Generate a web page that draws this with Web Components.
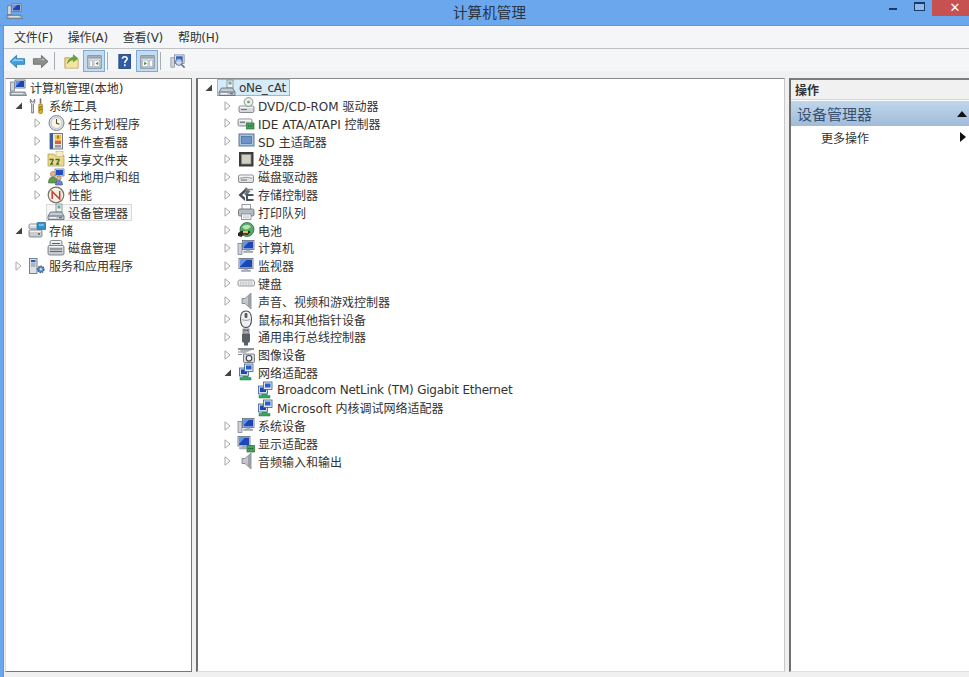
<!DOCTYPE html>
<html lang="zh"><head><meta charset="utf-8"><title>计算机管理</title>
<style>
html,body{margin:0;padding:0;background:#f0f0f0;overflow:hidden}
body{font-family:"DejaVu Sans","Noto Sans CJK SC",sans-serif;font-size:12px;color:#333}
</style></head>
<body>
<mmc-window>
  <mmc-titlebar slot="title">计算机管理</mmc-titlebar>
  <mmc-menubar slot="menu"><span>文件(F)</span><span>操作(A)</span><span>查看(V)</span><span>帮助(H)</span></mmc-menubar>
  <mmc-toolbar slot="tools">
    <tb-btn icon="back" w="19"></tb-btn><tb-btn icon="forward" w="24"></tb-btn><tb-sep></tb-sep>
    <tb-btn icon="folderup" w="22"></tb-btn><tb-btn icon="paneleft" w="22" on></tb-btn><tb-sep></tb-sep>
    <tb-btn icon="help" w="22"></tb-btn><tb-btn icon="paneright" w="22" on></tb-btn><tb-sep></tb-sep>
    <tb-btn icon="scan" w="22"></tb-btn>
  </mmc-toolbar>
  <tree-panel slot="left" style="--base:3px;--bl:1px solid #dcdcdc;--bt:1px solid #8a8a8a;--br:1px solid #777;--bb:1px solid #777">
    <tree-row level="0" arrow="none" icon="mgmt">计算机管理(本地)</tree-row>
    <tree-row level="1" arrow="open" icon="tools">系统工具</tree-row>
    <tree-row level="2" arrow="closed" icon="clock">任务计划程序</tree-row>
    <tree-row level="2" arrow="closed" icon="eventlog">事件查看器</tree-row>
    <tree-row level="2" arrow="closed" icon="share">共享文件夹</tree-row>
    <tree-row level="2" arrow="closed" icon="users">本地用户和组</tree-row>
    <tree-row level="2" arrow="closed" icon="perf">性能</tree-row>
    <tree-row level="2" arrow="blank" icon="devmgr" sel="grey">设备管理器</tree-row>
    <tree-row level="1" arrow="open" icon="storage">存储</tree-row>
    <tree-row level="2" arrow="blank" icon="diskmgmt">磁盘管理</tree-row>
    <tree-row level="1" arrow="closed" icon="services">服务和应用程序</tree-row>
  </tree-panel>
  <tree-panel slot="center" style="--base:20px;--bl:2px solid #6f6f6f;--bt:1px solid #8a8a8a;--br:1px solid #c8c8c8;--bb:1px solid #dcdcdc">
    <tree-row level="0" arrow="open" icon="devmgr" sel="blue"><span style="letter-spacing:-.3px">oNe_cAt</span></tree-row>
    <tree-row level="1" arrow="closed" icon="dvd">DVD/CD-ROM 驱动器</tree-row>
    <tree-row level="1" arrow="closed" icon="ide">IDE ATA/ATAPI 控制器</tree-row>
    <tree-row level="1" arrow="closed" icon="sd">SD 主适配器</tree-row>
    <tree-row level="1" arrow="closed" icon="cpu">处理器</tree-row>
    <tree-row level="1" arrow="closed" icon="disk">磁盘驱动器</tree-row>
    <tree-row level="1" arrow="closed" icon="storctl">存储控制器</tree-row>
    <tree-row level="1" arrow="closed" icon="printer">打印队列</tree-row>
    <tree-row level="1" arrow="closed" icon="battery">电池</tree-row>
    <tree-row level="1" arrow="closed" icon="computer">计算机</tree-row>
    <tree-row level="1" arrow="closed" icon="monitor">监视器</tree-row>
    <tree-row level="1" arrow="closed" icon="keyboard">键盘</tree-row>
    <tree-row level="1" arrow="closed" icon="speaker">声音、视频和游戏控制器</tree-row>
    <tree-row level="1" arrow="closed" icon="mouse">鼠标和其他指针设备</tree-row>
    <tree-row level="1" arrow="closed" icon="usb">通用串行总线控制器</tree-row>
    <tree-row level="1" arrow="closed" icon="camera">图像设备</tree-row>
    <tree-row level="1" arrow="open" icon="net">网络适配器</tree-row>
    <tree-row level="2" arrow="blank" icon="net"><span style="letter-spacing:-.22px">Broadcom NetLink (TM) Gigabit Ethernet</span></tree-row>
    <tree-row level="2" arrow="blank" icon="net">Microsoft 内核调试网络适配器</tree-row>
    <tree-row level="1" arrow="closed" icon="computer">系统设备</tree-row>
    <tree-row level="1" arrow="closed" icon="display">显示适配器</tree-row>
    <tree-row level="1" arrow="closed" icon="speaker">音频输入和输出</tree-row>
  </tree-panel>
  <action-pane slot="right" heading="操作" section="设备管理器" item="更多操作"></action-pane>
</mmc-window>
<script>
const MON=(x,y,w,h)=>`<rect x="${x}" y="${y}" width="${w}" height="${h}" fill="#e4e9f0" stroke="#5b6675" stroke-width=".8"/><rect x="${x+1}" y="${y+1}" width="${w-2}" height="${h-2}" fill="#1c46b8"/><path d="M${x+1} ${y+1}h${(w-2)*.6}L${x+1} ${y+h-2}z" fill="#5f93e6"/>`;
const STAND=(x,y)=>`<path d="M${x-1.5} ${y}h3v1.5h3V${y+3}h-9v-1.5h3z" fill="#a9b3bf" stroke="#79838f" stroke-width=".4"/>`;
const DRIVE=(x,y,w,h,c='#d5d8dc')=>`<rect x="${x}" y="${y}" width="${w}" height="${h}" rx="1.5" fill="${c}" stroke="#6b7076" stroke-width=".8"/><path d="M${x+1} ${y+1.2}h${w-2}" stroke="#fff"/>`;
const NET=`<path d="M6 11h5v3.500h3V17H3v-2.500h3z" fill="#37a85a" stroke="#1f7a3c" stroke-width=".5"/><rect x="2.500" y="5" width="9" height="8" fill="#cfdcec" stroke="#39608f" stroke-width=".8"/><rect x="4" y="6.500" width="6" height="4.500" fill="#1c46b8"/><rect x="7.500" y="1" width="8.500" height="7.500" fill="#dfe8f3" stroke="#39608f" stroke-width=".8"/><rect x="9" y="2.500" width="5.500" height="4" fill="#2a5ccc"/>`;
const ICONS={
back:`<path d="M1 9l7-6.500V6h8.500v6H8v3.500z" fill="#3f9fe0" stroke="#1d6fae" stroke-width=".8"/><path d="M3 9l4-3.400V7h8v1.500H7z" fill="#8fd2f6"/>`,
forward:`<path d="M17 9l-7-6.500V6H1.500v6H10v3.500z" fill="#8d8d8d" stroke="#5f5f5f" stroke-width=".8"/><path d="M3 7h8V5l3 3z" fill="#bdbdbd"/>`,
folderup:`<path d="M2 5h5l1.500 1.500H16V16H2z" fill="#ecd27a" stroke="#b3944a" stroke-width=".8"/><path d="M3 8h12.500v7.500H3z" fill="#f6e39d"/><path d="M4.500 11C6 6 9 4.500 11 4.200V1.800l4.500 3.700-4.500 4V7C9 7 7 8.500 4.500 11z" fill="#62a83c" stroke="#3e7c25" stroke-width=".5"/>`,
paneleft:`<rect x="2" y="3" width="14" height="13" fill="#eef3f8" stroke="#6d7680"/><rect x="2.500" y="3.500" width="13" height="2.500" fill="#97a1ab"/><path d="M4 7.500h3v7H4z" fill="#fff" stroke="#8a949e" stroke-width=".7"/><path d="M8.500 7.500h6v7h-6z" fill="#fff" stroke="#8a949e" stroke-width=".7"/><path d="M13 9v4l-2.800-2z" fill="#3c8f54"/>`,
paneright:`<rect x="2" y="3" width="14" height="13" fill="#eef3f8" stroke="#6d7680"/><rect x="2.500" y="3.500" width="13" height="2.500" fill="#97a1ab"/><path d="M3.500 7.500h6v7h-6z" fill="#fff" stroke="#8a949e" stroke-width=".7"/><path d="M11 7.500h3.500v7H11z" fill="#fff" stroke="#8a949e" stroke-width=".7"/><path d="M5.500 9v4l2.800-2z" fill="#3c8f54"/>`,
help:`<rect x="3" y="1.500" width="12.500" height="15" fill="#2f5ca8" stroke="#1e3f7c" stroke-width=".8"/><path d="M6.800 6.200c0-3 5-3 5 0 0 2-2.500 2-2.500 4.300M9.300 12v2" fill="none" stroke="#fff" stroke-width="1.700"/>`,
scan:`<rect x="2" y="5" width="4" height="10" fill="#cfd5dc" stroke="#7a828c" stroke-width=".7"/><rect x="6" y="2" width="10" height="9" fill="#dfe6ef" stroke="#67707c" stroke-width=".7"/><rect x="7.500" y="3.500" width="7" height="6" fill="#2a5ccc"/><circle cx="10.500" cy="9.500" r="3.600" fill="#cfe3f7" fill-opacity=".8" stroke="#5a6b80"/><path d="M13 12l3.500 3.500" stroke="#5a6b80" stroke-width="1.600"/>`,
mgmt:`${MON(6,1,10,8)}<rect x="1.500" y="3" width="4" height="9" fill="#cdd3da" stroke="#6a727c" stroke-width=".7"/><path d="M1 13h15l1.500 3.500H1z" fill="#aeb5bd" stroke="#5f6771" stroke-width=".7"/><path d="M3 14.500h11" stroke="#e8ebee"/>`,
tools:`<path d="M2.500 2c-1 3 .7 4.600 1.200 5V16h1.700V7c.6-.5 2-2 1.200-5L5.500 5h-1.800z" fill="#f5f5f5" stroke="#6e6e6e" stroke-width=".9"/><path d="M12.500 1.500v5" stroke="#6e6e6e" stroke-width="1.600"/><rect x="10.800" y="7" width="3.600" height="9.500" rx="1.400" fill="#efb21f" stroke="#8a6510" stroke-width=".7"/><path d="M11 11l3-1.600M11 13.500l3-1.600" stroke="#6c4e08" stroke-width=".8"/>`,
clock:`<circle cx="9.500" cy="9" r="7.500" fill="#dbe2ea" stroke="#7b8590"/><circle cx="9.500" cy="9" r="5.400" fill="#fbf7e8" stroke="#a5adb6" stroke-width=".6"/><path d="M9.500 5v4.300l3 .9" fill="none" stroke="#5c4a2a" stroke-width="1.100"/>`,
eventlog:`<rect x="3" y="1.500" width="12.500" height="15.500" fill="#f2e6d0" stroke="#5a5a6a" stroke-width=".8"/><rect x="3" y="1.500" width="3" height="15.500" fill="#3b5c9a"/><rect x="8" y="3" width="6" height="4.500" fill="#efc433"/><path d="M11 3.500v3" stroke="#7a2a10"/><rect x="8" y="8.500" width="6" height="3.500" fill="#d8643a"/><rect x="8" y="13" width="6" height="2.600" fill="#8ba0c0"/>`,
share:`<path d="M1 4h6l1 1.500h9V16H1z" fill="#ecd98b" stroke="#ab9a58" stroke-width=".7"/><rect x="9" y="1.500" width="7" height="5" fill="#f5eecb" stroke="#b4a76a" stroke-width=".5"/><path d="M2.500 9.500h3.500v1L3.800 14h2.400M8.500 9.500h3.500v1L9.800 14h2.400" fill="none" stroke="#3f6c2c" stroke-width="1.300"/>`,
users:`<rect x="8" y="1" width="9" height="7" fill="#dfe6ef" stroke="#5b6675" stroke-width=".7"/><rect x="9" y="2" width="7" height="5" fill="#1f4fc0"/><circle cx="6" cy="6" r="2.600" fill="#e6b48a" stroke="#8a6240" stroke-width=".5"/><path d="M1.500 15c0-4.500 2-6 4.500-6s4.500 1.500 4.500 6z" fill="#5f9a4c" stroke="#3f6b30" stroke-width=".6"/><circle cx="12" cy="10" r="2.200" fill="#e6b48a" stroke="#8a6240" stroke-width=".5"/><path d="M8.500 17c0-3.500 1.500-4.500 3.500-4.500s3.500 1 3.500 4.500z" fill="#6d84c6" stroke="#44568c" stroke-width=".6"/>`,
perf:`<circle cx="9" cy="9" r="7.800" fill="#f5efe4" stroke="#7c6f63" stroke-width="1.200"/><path d="M5.200 13V5.500l7.500 7.500V5" fill="none" stroke="#c23c32" stroke-width="1.500"/>`,
devmgr:`<rect x="9" y="1" width="6" height="8" fill="#f0f2f4" stroke="#7c8590" stroke-width=".8"/><rect x="10.500" y="2.500" width="3" height="3" fill="#5db0a0"/><path d="M3.500 9h11l2.500 4v3.500H1V13z" fill="#c6ccd3" stroke="#5a626c" stroke-width=".8"/><path d="M1.500 13h15" stroke="#62707e"/><path d="M3 14.700h6" stroke="#fff"/><rect x="12" y="14.200" width="3" height="1" fill="#4f5963"/>`,
storage:`${DRIVE(1,3,11,5,'#d9dde1')}${DRIVE(1,9,13,7,'#c9cdd1')}<rect x="9" y="1.500" width="9" height="7" rx="1" fill="#2f93c7" stroke="#1b6a94" stroke-width=".7"/><path d="M11 4h5" stroke="#bfe6f7"/><circle cx="11" cy="13" r="1" fill="#4f5963"/>`,
diskmgmt:`${DRIVE(3,1.500,12,6,'#e2e4e7')}${DRIVE(1,6.500,16,9.500,'#c8ccd1')}<path d="M3 10h12M3 12.500h12" stroke="#5f666e"/><rect x="5" y="4" width="8" height="1" fill="#5f666e"/>`,
services:`<rect x="1.500" y="1.500" width="7.500" height="15" fill="#dde2e8" stroke="#5d6670" stroke-width=".8"/><rect x="3" y="3" width="4.500" height="2.200" fill="#2d5cb5"/><path d="M3 7h4.500M3 9h4.500" stroke="#7e8893"/><circle cx="12.800" cy="12.300" r="3.100" fill="#5f91c9" stroke="#37608f" stroke-width="1.500" stroke-dasharray="1.500 .8"/><circle cx="12.800" cy="12.300" r="1" fill="#f3f6f9"/>`,
dvd:`${DRIVE(2,9,15,6.500)}<circle cx="11.500" cy="5" r="4.400" fill="#e7f0e8" stroke="#747c78" stroke-width=".8"/><circle cx="11.500" cy="5" r="1.300" fill="#5fa06e"/><rect x="4" y="12" width="6" height="1" fill="#6b7076"/>`,
ide:`${DRIVE(1,5,14,7,'#dde0e4')}<rect x="3" y="7.500" width="5" height="1.500" fill="#7b8288"/><rect x="9.500" y="9" width="7.500" height="6" fill="#46a352" stroke="#27703a" stroke-width=".7"/><path d="M11 12h4.500" stroke="#15502a" stroke-dasharray="1 .7"/>`,
sd:`<rect x="2" y="2" width="15" height="12" fill="#a8c1e2" stroke="#54698a" stroke-width=".9"/><rect x="4.500" y="4.500" width="10" height="7" fill="#6d92c4" stroke="#3f5f8e" stroke-width=".6"/>`,
cpu:`<rect x="2" y="2" width="14.500" height="14.500" fill="#3a3a3a"/><rect x="4.500" y="4.500" width="9.500" height="9.500" fill="#cfcfc4" stroke="#8a8a80" stroke-width=".7"/>`,
disk:`${DRIVE(1.500,7,15,7.500,'#dfe1e3')}<path d="M3 10.500c3-1.600 9-1.600 12 0" fill="none" stroke="#9aa0a6"/><rect x="4" y="11.500" width="6" height="1" fill="#6b7076"/>`,
storctl:`<path d="M9 1.500l4 4-4 4-1.500-1.500L9 6.500 7 5z" fill="#6b7480" stroke="#3f4650" stroke-width=".5"/><path d="M1.500 9L8 3v3.500L5 9l3 2.500V15z" fill="#484f58"/><path d="M9 8h7.500v2H11v3h5.500v2H9z" fill="#4e5660"/><path d="M10 3.500h6" stroke="#858d96" stroke-width="1.500"/>`,
printer:`<rect x="5" y="1.500" width="8.500" height="5" fill="#fafafa" stroke="#7b838c" stroke-width=".8"/><rect x="1.500" y="6" width="15.500" height="7" rx="1.500" fill="#b6bcc3" stroke="#5f666e" stroke-width=".8"/><rect x="4.500" y="11" width="9.500" height="5.500" fill="#fff" stroke="#7b838c" stroke-width=".8"/><path d="M6 13h6.500M6 14.800h6.500" stroke="#a0a6ac" stroke-width=".7"/>`,
battery:`<circle cx="10" cy="8.500" r="7" fill="#58a868" stroke="#2c6e3d" stroke-width=".8"/><path d="M5 6c3-3 7-3 9 0-2 1-3 3-6 2.500z" fill="#b9e3b0"/><path d="M1 12l4-2.500 5 1.500 2-1.500 1.500 1.500-3 3-4-.5-2 2.500L1 15z" fill="#2a2a22"/><rect x="6" y="10" width="5" height="2.200" fill="#e2c34a"/>`,
computer:`<rect x="1" y="4.500" width="4" height="11" fill="#cdd3da" stroke="#6e7680" stroke-width=".7"/>${MON(5.500,1.500,11.500,9)}${STAND(11.200,10.500)}`,
monitor:`${MON(2,1.500,14,10)}${STAND(9,11.500)}`,
keyboard:`<path d="M3 6h12.500c1.500 0 2 1 2 2v2.500c0 1-.5 1.500-1.500 1.500H2.500C1.500 12 1 11.500 1 10.500V8c0-1 .6-2 2-2z" fill="#eceded" stroke="#7b7f84" stroke-width=".8"/><path d="M3 8.200h12.500M3 10h12.500" stroke="#9ea2a6" stroke-width=".8" stroke-dasharray="1 .6"/>`,
speaker:`<path d="M5 6.500h3L14 1v16l-6-5.500H5z" fill="#c3c7cb" stroke="#777c82" stroke-width=".8"/><path d="M11 4v10l3 3V1z" fill="#9aa0a6"/>`,
mouse:`<path d="M9 1c4 0 5.500 3 5.500 8s-1.500 8.500-5.500 8.500S3.500 14 3.500 9 5 1 9 1z" fill="#eef0f2" stroke="#4d5258" stroke-width="1.100"/><rect x="7.600" y="3" width="2.800" height="5" rx="1.200" fill="#555b62"/><path d="M5 9.500c2.500 1.200 5.500 1.200 8 0" fill="none" stroke="#9ba0a6"/>`,
usb:`<rect x="6" y="1" width="6" height="5" fill="#a4a8ac" stroke="#5a5e62" stroke-width=".7"/><path d="M7.500 2.500h1M9.800 2.500h1" stroke="#333"/><path d="M5 6h8v7c0 1-1 1.500-2 2v2.500H7V15c-1-.5-2-1-2-2z" fill="#5a5f65"/>`,
camera:`<path d="M1 2h16v2H1z" fill="#8c9299"/><path d="M3 4h12L6 8z" fill="#aeb3b8"/><rect x="6.500" y="8" width="11" height="8.500" rx="1" fill="#d8dbde" stroke="#5f646a" stroke-width=".8"/><circle cx="12" cy="12.300" r="2.800" fill="#f0f2f4" stroke="#3f444a" stroke-width="1.100"/><path d="M1 6h4M1 8.500h4" stroke="#868b91"/>`,
net:NET,
display:`${MON(1,1.500,12,9.500)}${STAND(7,11)}<rect x="10" y="10.500" width="7.500" height="6.500" fill="#46a352" stroke="#27703a" stroke-width=".7"/><path d="M11.500 13.500h4.500" stroke="#15502a" stroke-dasharray="1 .7"/>`
};
function shadow(el,html){el.attachShadow({mode:'open'}).innerHTML=html;return el.shadowRoot}
const svg=(name,s=18)=>`<svg width="${s}" height="${s}" viewBox="0 0 18 18" style="display:block;flex:none" aria-hidden="true">${ICONS[name]||''}</svg>`;

customElements.define('mmc-window',class extends HTMLElement{constructor(){super();shadow(this,`<style>
:host{display:grid;width:969px;height:677px;overflow:hidden;background:#f0f0f0;
grid-template-columns:4px 1fr;grid-template-rows:26px 23px 26px 3px 1fr;}
.edge{grid-column:1;grid-row:2/6;background:#6aa7ec;border-right:1px solid #5d97d8;box-sizing:border-box}
::slotted([slot=title]){grid-column:1/-1;grid-row:1}
::slotted([slot=menu]){grid-column:2/-1;grid-row:2}
::slotted([slot=tools]){grid-column:2/-1;grid-row:3}
.work{grid-column:2/-1;grid-row:5;display:grid;grid-template-columns:187px 589px 180px;column-gap:4px;height:594px;margin-left:1px;overflow:hidden}
</style><div class="edge"></div><slot name="title"></slot><slot name="menu"></slot><slot name="tools"></slot>
<div class="work"><slot name="left"></slot><slot name="center"></slot><slot name="right"></slot></div>`)}});

customElements.define('mmc-titlebar',class extends HTMLElement{constructor(){super();shadow(this,`<style>
:host{display:flex;position:relative;height:26px;box-sizing:border-box;background:#6aa7ec;border-bottom:1px solid #5a97df;align-items:center;justify-content:center;
font:14.6px "Noto Sans CJK SC",sans-serif;color:#2b3440;padding:0 0 3px 10px}
.app{position:absolute;left:6px;top:3px}
.ctl{position:absolute;right:0;top:0;height:16px;display:flex}
.b{position:relative;width:21px;height:16px}
.min::after{content:"";position:absolute;left:1px;top:8px;width:8px;height:2px;background:#1c3a66}
.max::after{content:"";position:absolute;left:5px;top:2px;width:11px;height:9px;box-sizing:border-box;border:1px solid #1c3a66;border-top-width:2px;background:#8db9ee}
.close{width:37px;box-sizing:border-box;padding-left:9px;background:#c75050;color:#fff;font:700 13px/16px "DejaVu Sans",sans-serif;text-align:center;margin-left:2px}
</style><span class="app">${svg('mgmt',17)}</span><slot></slot><div class="ctl"><div class="b min"></div><div class="b max"></div><div class="b close">✕</div></div>`)}});

customElements.define('mmc-menubar',class extends HTMLElement{constructor(){super();shadow(this,`<style>
:host{display:flex;height:23px;box-sizing:border-box;background:#f5f6f7;border-bottom:1px solid #bfc1c4;padding:0 0 1px 10px;gap:15px;align-items:center;font:12px "DejaVu Sans","Noto Sans CJK SC",sans-serif;color:#333}
::slotted(span){letter-spacing:-.3px}
</style><slot></slot>`)}});

customElements.define('mmc-toolbar',class extends HTMLElement{constructor(){super();shadow(this,`<style>
:host{display:flex;height:26px;box-sizing:border-box;background:linear-gradient(#f5f6f7 0 22px,#f0f0f0 22px);padding:1px 0 3px 4px;align-items:center}
</style><slot></slot>`)}});

customElements.define('tb-btn',class extends HTMLElement{constructor(){super();const w=this.getAttribute('w')||22;const on=this.hasAttribute('on');shadow(this,`<style>
:host{display:flex;width:${w}px;height:22px;box-sizing:border-box;align-items:center;justify-content:center;flex:none;
${on?'background:#c4dcf2;border:1px solid #7eaad6;':''}margin-right:1px}
</style>${svg(this.getAttribute('icon'),17)}`)}});

customElements.define('tb-sep',class extends HTMLElement{constructor(){super();shadow(this,`<style>
:host{display:block;width:1px;height:18px;background:#a9acb0;margin:0 5px 0 1px;flex:none}
</style>`)}});

customElements.define('tree-panel',class extends HTMLElement{constructor(){super();shadow(this,`<style>
:host{display:flex;flex-direction:column;box-sizing:border-box;height:594px;background:#fff;border-left:var(--bl);border-top:var(--bt);border-right:var(--br);border-bottom:var(--bb);overflow:hidden}
</style><slot></slot>`)}});

customElements.define('tree-row',class extends HTMLElement{constructor(){super();
const lv=+this.getAttribute('level'),a=this.getAttribute('arrow'),sel=this.getAttribute('sel');
const arrows={open:`<svg width="9" height="9" viewBox="0 0 9 9"><path d="M8 1.500V8H1.500z" fill="#444"/></svg>`,
closed:`<svg width="7" height="10" viewBox="0 0 7 10"><path d="M1 .8l5 4.200-5 4.200z" fill="#fff" stroke="#a6a6a6"/></svg>`,blank:''};
const selCss=sel==='grey'?'background:#f7f7f7;border-color:#dadada;':sel==='blue'?'background:#d6ebf8;border-color:#7cc3e2;':'';
shadow(this,`<style>
:host{display:flex;height:17.786px;align-items:center;flex:none;white-space:nowrap;font:12px "DejaVu Sans","Noto Sans CJK SC",sans-serif;color:#333;
padding-left:calc(var(--base,3px) + ${lv}*19px - ${a==='none'?0:19}px)}
.a{width:19px;height:17px;display:${a==='none'?'none':'flex'};align-items:center;justify-content:center;flex:none}
.w{display:flex;align-items:center;height:17px;box-sizing:border-box;border:1px solid transparent;margin-left:-1px;padding-right:3px;${selCss}}
.t{margin-left:3px}
</style><span class="a">${arrows[a]||''}</span><span class="w">${svg(this.getAttribute('icon'))}<span class="t"><slot></slot></span></span>`)}});

customElements.define('action-pane',class extends HTMLElement{constructor(){super();shadow(this,`<style>
:host{display:flex;flex-direction:column;box-sizing:border-box;height:594px;background:#fff;border-left:2px solid #6f6f6f;border-top:2px solid #7c7c7c;border-bottom:1px solid #e0e0e0;font:12px "Noto Sans CJK SC",sans-serif;color:#333}
.h{height:20px;box-sizing:border-box;display:flex;align-items:center;padding-left:4px;background:#f1f1f1;font-weight:700;border-bottom:1px solid #d5d5d5}
.s{height:25px;margin-top:1px;display:flex;align-items:center;justify-content:space-between;padding:0 2px 0 6px;background:linear-gradient(#c0d6ec,#a0bcda);font-size:15px;color:#3a5270}
.i{display:flex;align-items:center;justify-content:space-between;height:22px;padding:0 3px 0 30px}
</style><div class="h">${this.getAttribute('heading')}</div>
<div class="s"><span>${this.getAttribute('section')}</span><svg width="10" height="6" viewBox="0 0 10 6"><path d="M0 6l5-6 5 6z" fill="#111"/></svg></div>
<div class="i"><span>${this.getAttribute('item')}</span><svg width="6" height="10" viewBox="0 0 6 10"><path d="M0 0l6 5-6 5z" fill="#111"/></svg></div>`)}});
</script>
</body></html>
